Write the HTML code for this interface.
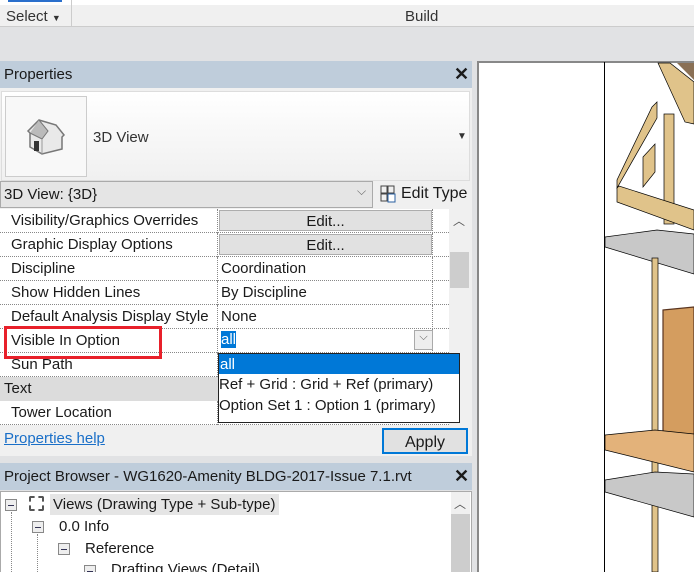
<!DOCTYPE html>
<html><head><style>
*{margin:0;padding:0;box-sizing:border-box}
html,body{width:694px;height:572px;overflow:hidden}
body{position:relative;background:#e1e2e4;font-family:"Liberation Sans",sans-serif;font-size:15px;color:#1a1a1a}
#w{position:absolute;left:0;top:0;width:694px;height:572px;overflow:hidden}
.a{position:absolute}
.row{position:absolute;left:0;width:449px;height:24px;border-bottom:1px dotted #888}
.row .l{position:absolute;left:11px;top:3px}
.row .v{position:absolute;left:217px;top:0;width:216px;height:24px;border-left:1px dotted #888;border-right:1px dotted #888;padding:3px 0 0 3px}
.btn{position:absolute;left:219px;top:1px;width:213px;height:21px;background:#e1e1e1;border:1px solid #adadad;text-align:center;padding-top:2px}
.pm{position:absolute;width:12px;height:12px;border:1px solid #888;background:#eee}
.pm:after{content:"";position:absolute;left:2px;top:5px;width:6px;height:1px;background:#335}
</style></head><body><div id="w">
<div class="a" style="left:0;top:0;width:694px;height:6px;background:#fff"></div>
<div class="a" style="left:8px;top:0;width:54px;height:2px;background:#2a6fcc"></div>
<div class="a" style="left:0;top:5px;width:694px;height:22px;background:#f0f0f0;border-bottom:1px solid #ccc"></div>
<div class="a" style="left:71px;top:0;width:1px;height:27px;background:#ccc"></div>
<div class="a" style="left:6px;top:8px;color:#333">Select <span style="font-size:9px">▼</span></div>
<div class="a" style="left:405px;top:8px;color:#333">Build</div>

<div class="a" style="left:0;top:61px;width:472px;height:27px;background:#bfcddb"></div>
<div class="a" style="left:4px;top:66px">Properties</div>
<div class="a" style="left:454px;top:64px;font-size:18px;font-weight:bold">✕</div>
<div class="a" style="left:0;top:88px;width:472px;height:368px;background:#f0f0f0"></div>
<div class="a" style="left:1px;top:91px;width:469px;height:90px;background:linear-gradient(#fff,#f0f0f0);border:1px solid #ddd"></div>
<div class="a" style="left:5px;top:96px;width:82px;height:81px;background:#f8f8f8;border:1px solid #ccc"></div>
<svg class="a" style="left:26px;top:117px" width="40" height="40" viewBox="0 0 40 40"><path d="M2 14 L13 3 L30 8 L38 18 L36 20 L36 32 L16 37 L4 30 L4 16 Z" fill="#e9e9e9" stroke="#777" stroke-width="1.5"/><path d="M13 3 L22 14 L16 22 L4 16" fill="#bbb" stroke="#777"/><path d="M16 22 L16 37" stroke="#999"/><rect x="8" y="24" width="5" height="10" fill="#333"/></svg>
<div class="a" style="left:93px;top:129px;color:#333">3D View</div>
<div class="a" style="left:457px;top:131px;font-size:10px;color:#333">▼</div>
<div class="a" style="left:0;top:181px;width:373px;height:27px;background:#e5e5e5;border:1px solid #aaa"></div>
<div class="a" style="left:4px;top:186px">3D View: {3D}</div>
<div class="a" style="left:357px;top:184px;font-size:12px;color:#666">⌵</div>
<svg class="a" style="left:380px;top:185px" width="16" height="18"><rect x="1" y="1" width="6" height="7" fill="none" stroke="#444"/><rect x="8" y="1" width="6" height="7" fill="none" stroke="#444"/><rect x="1" y="9" width="6" height="7" fill="none" stroke="#444"/><rect x="8" y="9" width="7" height="8" fill="#fff" stroke="#2a5fa0"/></svg>
<div class="a" style="left:401px;top:185px;font-size:16px">Edit Type</div>

<div class="a" style="left:0;top:209px;width:449px;height:216px;background:#fff"></div>
<div class="row" style="top:209px"><span class="l">Visibility/Graphics Overrides</span><div class="v" style="padding:0"><div class="btn" style="left:1px">Edit...</div></div></div>
<div class="row" style="top:233px"><span class="l">Graphic Display Options</span><div class="v" style="padding:0"><div class="btn" style="left:1px">Edit...</div></div></div>
<div class="row" style="top:257px"><span class="l">Discipline</span><div class="v">Coordination</div></div>
<div class="row" style="top:281px"><span class="l">Show Hidden Lines</span><div class="v">By Discipline</div></div>
<div class="row" style="top:305px"><span class="l">Default Analysis Display Style</span><div class="v">None</div></div>
<div class="row" style="top:329px"><span class="l">Visible In Option</span><div class="v" style="padding:2px 0 0 3px"><span style="background:#0078d7;color:#fff">all</span><div class="a" style="left:196px;top:1px;width:19px;height:20px;border:1px solid #aaa;background:#eee;font-size:11px;text-align:center;color:#555">⌵</div></div></div>
<div class="row" style="top:353px"><span class="l">Sun Path</span><div class="v"></div></div>
<div class="row" style="top:377px;background:#dcdcdc;border:none"><span class="l" style="left:4px">Text</span></div>
<div class="row" style="top:401px"><span class="l">Tower Location</span><div class="v"></div></div>
<div class="a" style="left:4px;top:326px;width:158px;height:33px;border:3px solid #e8202a"></div>
<div class="a" style="left:449px;top:209px;width:20px;height:216px;background:#f0f0f0"></div>
<div class="a" style="left:450px;top:252px;width:19px;height:36px;background:#cdcdcd"></div>
<div class="a" style="left:453px;top:212px;font-size:12px;color:#555">︿</div>
<div class="a" style="left:218px;top:353px;width:242px;height:70px;background:#fff;border:1px solid #222"></div>
<div class="a" style="left:219px;top:354px;width:240px;height:20px;background:#0078d7;color:#fff;padding:2px 0 0 1px">all</div>
<div class="a" style="left:219px;top:376px">Ref + Grid : Grid + Ref (primary)</div>
<div class="a" style="left:219px;top:397px">Option Set 1 : Option 1 (primary)</div>
<div class="a" style="left:4px;top:430px;color:#1a6fc8;text-decoration:underline">Properties help</div>
<div class="a" style="left:382px;top:428px;width:86px;height:26px;background:#e1e1e1;border:2px solid #0078d7;text-align:center;padding-top:4px;font-size:16px">Apply</div>

<div class="a" style="left:0;top:463px;width:472px;height:27px;background:#bfcddb"></div>
<div class="a" style="left:4px;top:468px">Project Browser - WG1620-Amenity BLDG-2017-Issue 7.1.rvt</div>
<div class="a" style="left:454px;top:466px;font-size:18px;font-weight:bold">✕</div>
<div class="a" style="left:0;top:491px;width:472px;height:81px;background:#fff;border:1px solid #aaa;border-bottom:none"></div>
<div class="a" style="left:451px;top:492px;width:19px;height:80px;background:#f0f0f0"></div>
<div class="a" style="left:451px;top:514px;width:19px;height:58px;background:#cdcdcd"></div>
<div class="a" style="left:454px;top:495px;font-size:12px;color:#555">︿</div>
<div class="a" style="left:50px;top:494px;width:229px;height:21px;background:#e5e5e5"></div>
<div class="a" style="left:29px;top:496px;width:15px;height:15px;border:2px dashed #555;border-radius:2px"></div>
<div class="a" style="left:53px;top:496px">Views (Drawing Type + Sub-type)</div>
<div class="a" style="left:59px;top:518px">0.0 Info</div>
<div class="a" style="left:85px;top:540px">Reference</div>
<div class="a" style="left:111px;top:561px;height:11px;overflow:hidden;line-height:17px">Drafting Views (Detail)</div>
<div class="pm" style="left:5px;top:499px"></div>
<div class="pm" style="left:32px;top:521px"></div>
<div class="pm" style="left:58px;top:543px"></div>
<div class="pm" style="left:84px;top:565px;height:7px;border-bottom:none"></div>
<div class="a" style="left:11px;top:512px;height:60px;border-left:1px dotted #888"></div>
<div class="a" style="left:37px;top:534px;height:38px;border-left:1px dotted #888"></div>

<div class="a" style="left:477px;top:61px;width:217px;height:511px;background:#fff;border-left:2px solid #888;border-top:2px solid #888"></div>
<div class="a" style="left:604px;top:62px;width:1px;height:510px;background:#000"></div>
<svg class="a" style="left:605px;top:62px" width="89" height="510">
<polygon points="53,1 65,1 89,20 89,62 80,60" fill="#e0c38a" stroke="#000" stroke-width=".7"/>
<polygon points="72,1 89,1 89,18" fill="#8a7055"/>
<polygon points="47,45 52,40 52,56 12,126 12,118" fill="#e0c38a" stroke="#000" stroke-width=".7"/>
<polygon points="38,95 50,82 50,110 38,125" fill="#e0c38a" stroke="#000" stroke-width=".7"/>
<rect x="59" y="52" width="10" height="110" fill="#e0c38a" stroke="#000" stroke-width=".7"/>
<polygon points="12,126 14,124 89,148 89,168 12,140" fill="#e0c38a" stroke="#000" stroke-width=".7"/>
<polygon points="0,175 52,168 89,172 89,212 0,185" fill="#c8c8c8" stroke="#000" stroke-width=".7"/>
<rect x="47" y="196" width="6" height="314" fill="#e0c38a" stroke="#000" stroke-width=".7"/>
<polygon points="58,248 89,245 89,390 58,395" fill="#d49d5f" stroke="#5a3520" stroke-width="1.2"/>
<polygon points="0,373 50,368 89,372 89,410 0,388" fill="#e3b27a" stroke="#000" stroke-width=".7"/>
<polygon points="0,418 50,410 89,412 89,455 0,430" fill="#c8c8c8" stroke="#000" stroke-width=".7"/>
</svg>
</div></body></html>
